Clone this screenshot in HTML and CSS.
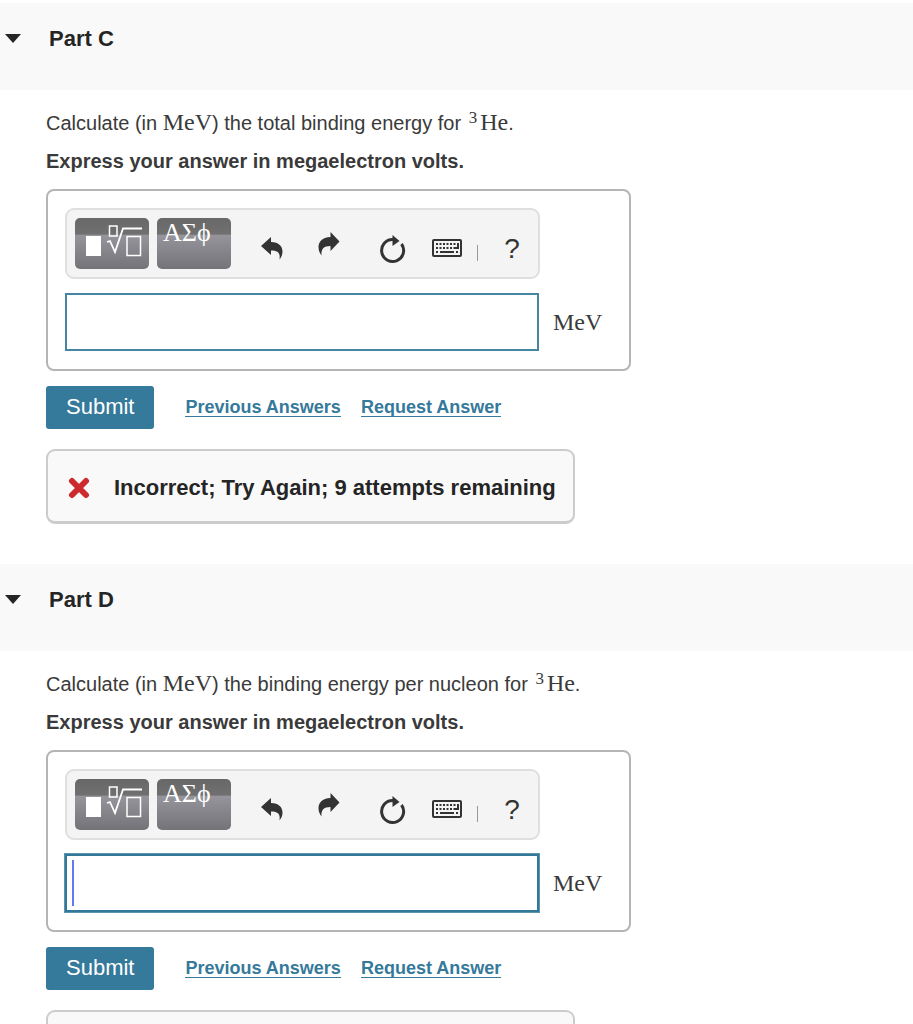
FILE: index.html
```
<!DOCTYPE html>
<html lang="en">
<head>
    <meta charset="UTF-8">
    <meta name="viewport" content="width=device-width, initial-scale=1.0">
    <title>Binding Energy</title>
    <link rel="stylesheet" href="styles.css">
</head>
<body>
    <!-- toolbar icons, shared by both parts -->
    <svg class="sprite" aria-hidden="true">
        <symbol id="icon-template" viewBox="0 0 74 51">
            <rect x="11" y="18" width="15" height="20" fill="#fff"/>
            <rect x="34.500" y="8" width="7.500" height="10" fill="none" stroke="#fff" stroke-width="1.500"/>
            <path d="M32 24l3-1 5 11L48 10.500h19" fill="none" stroke="#fff" stroke-width="1.800"/>
            <rect x="52" y="18.500" width="13.500" height="19" fill="none" stroke="#fff" stroke-width="1.500"/>
        </symbol>
        <symbol id="icon-undo" viewBox="0 0 22 50">
            <path d="M0 28l10-9v5c8 0 11.500 4.500 11.500 9.500 0 3-1 5.500-3 8 1-6.500-1.500-9-8.500-9V37z"/>
        </symbol>
        <symbol id="icon-redo" viewBox="0 0 22 50">
            <path d="M21.500 23.500L12.500 14v5C4 19.500.5 24 .5 29c0 3 1 6 3 8.500C3 31 5.500 28 12.500 28v5z"/>
        </symbol>
        <symbol id="icon-reset" viewBox="0 0 26 50">
            <path d="M13 21.500A11 11 0 1 0 21.500 26" fill="none" stroke="currentColor" stroke-width="3"/>
            <path d="M12.500 17l7 6-7 5z"/>
        </symbol>
        <symbol id="icon-keyboard" viewBox="0 0 30 50">
            <rect x="1" y="22" width="28" height="16" rx="1" fill="none" stroke="currentColor" stroke-width="2"/>
            <path d="M4 26h20M4 30h19M4 34h3M24 34h3" fill="none" stroke="currentColor" stroke-width="2" stroke-dasharray="2 1.500"/>
            <path d="M8 34h14M26 25v5h-4" fill="none" stroke="currentColor" stroke-width="2"/>
        </symbol>
    </svg>

    <section class="part">
        <header class="part-header">
            <span class="arrow"></span>
            <h2>Part C</h2>
        </header>
        <div class="part-body">
            <p class="question">Calculate (in <span class="math">MeV</span>) the total binding energy for <span class="math"><sup>3</sup>He</span>.</p>
            <p class="instructions"><label for="answer-c">Express your answer in megaelectron volts.</label></p>
            <div class="answer-box">
                <div class="toolbar">
                    <button type="button" class="dark-btn" aria-label="Templates"><svg width="74" height="51"><use href="#icon-template"/></svg></button>
                    <button type="button" class="dark-btn symbols">ΑΣϕ</button>
                    <button type="button" class="icon-btn" aria-label="Undo"><svg width="22" height="50"><use href="#icon-undo"/></svg></button>
                    <button type="button" class="icon-btn" aria-label="Redo"><svg width="22" height="50"><use href="#icon-redo"/></svg></button>
                    <button type="button" class="icon-btn" aria-label="Reset"><svg width="26" height="50"><use href="#icon-reset"/></svg></button>
                    <button type="button" class="icon-btn" aria-label="Keyboard shortcuts"><svg width="30" height="50"><use href="#icon-keyboard"/></svg></button>
                    <span class="divider"></span>
                    <button type="button" class="icon-btn help" aria-label="Help">?</button>
                </div>
                <div class="answer-row">
                    <input type="text" id="answer-c" class="answer-input">
                    <span class="math">MeV</span>
                </div>
            </div>
            <div class="actions">
                <button type="submit" class="submit-btn">Submit</button>
                <a href="#">Previous Answers</a>
                <a href="#">Request Answer</a>
            </div>
            <div class="feedback">
                <svg class="wrong" width="22" height="22" viewBox="0 0 22 22"><path d="M4 4l14 14M18 4L4 18"/></svg>
                <span>Incorrect; Try Again; 9 attempts remaining</span>
            </div>
        </div>
    </section>

    <section class="part">
        <header class="part-header">
            <span class="arrow"></span>
            <h2>Part D</h2>
        </header>
        <div class="part-body">
            <p class="question">Calculate (in <span class="math">MeV</span>) the binding energy per nucleon for <span class="math"><sup>3</sup>He</span>.</p>
            <p class="instructions"><label for="answer-d">Express your answer in megaelectron volts.</label></p>
            <div class="answer-box">
                <div class="toolbar">
                    <button type="button" class="dark-btn" aria-label="Templates"><svg width="74" height="51"><use href="#icon-template"/></svg></button>
                    <button type="button" class="dark-btn symbols">ΑΣϕ</button>
                    <button type="button" class="icon-btn" aria-label="Undo"><svg width="22" height="50"><use href="#icon-undo"/></svg></button>
                    <button type="button" class="icon-btn" aria-label="Redo"><svg width="22" height="50"><use href="#icon-redo"/></svg></button>
                    <button type="button" class="icon-btn" aria-label="Reset"><svg width="26" height="50"><use href="#icon-reset"/></svg></button>
                    <button type="button" class="icon-btn" aria-label="Keyboard shortcuts"><svg width="30" height="50"><use href="#icon-keyboard"/></svg></button>
                    <span class="divider"></span>
                    <button type="button" class="icon-btn help" aria-label="Help">?</button>
                </div>
                <div class="answer-row">
                    <input type="text" id="answer-d" class="answer-input active">
                    <span class="math">MeV</span>
                </div>
            </div>
            <div class="actions">
                <button type="submit" class="submit-btn">Submit</button>
                <a href="#">Previous Answers</a>
                <a href="#">Request Answer</a>
            </div>
            <div class="feedback"></div>
        </div>
    </section>
</body>
</html>
```
FILE: styles.css
```
* {
    box-sizing: border-box;
}
body {
    margin: 0;
    padding-top: 3px;
    background: #fff;
    color: #3a3a3a;
    font-family: "Liberation Sans", Arial, Helvetica, sans-serif;
    font-size: 20px;
    line-height: 24px;
}
button {
    font-family: inherit;
    cursor: pointer;
}
.sprite {
    display: none;
}
.part-header {
    display: flex;
    align-items: flex-start;
    gap: 28px;
    height: 87px;
    padding: 24px 5px;
    background: #f9f9f9;
    color: #252525;
}
.part-header h2 {
    margin: 0;
    font-size: 22px;
    line-height: 24px;
}
.arrow {
    margin-top: 7px;
    border-left: 8px solid transparent;
    border-right: 8px solid transparent;
    border-top: 9px solid #252525;
}
.part-body {
    padding: 19px 20px 40px 46px;
}
.question,
.instructions {
    margin: 0 0 12px;
    line-height: 26px;
}
.instructions {
    margin-bottom: 15px;
    font-weight: bold;
}
.math {
    font-family: "Liberation Serif", "Times New Roman", serif;
    font-size: 24px;
}
.math sup {
    margin: 0 3px 0 2px;
    font-size: 17px;
    line-height: 0;
    vertical-align: 7px;
}
.answer-box {
    max-width: 585px;
    padding: 17px 17px 18px;
    border: 2px solid #b5b5b5;
    border-radius: 8px;
}
.toolbar {
    display: grid;
    grid-template-columns: 82px 84px 62px 52px 76px 32px 28px 42px;
    width: 475px;
    max-width: 100%;
    padding: 8px;
    border: 2px solid #dfdfdf;
    border-radius: 9px;
    background: #f4f4f4;
}
.dark-btn {
    width: 74px;
    height: 51px;
    padding: 0;
    border: 0;
    border-radius: 5px;
    background: linear-gradient(#686868, #707070 32%, #96959c 33%, #747378);
    color: #fff;
}
.dark-btn svg,
.icon-btn svg {
    display: block;
}
.symbols {
    padding: 0 0 22px 6px;
    font-family: "Liberation Serif", serif;
    font-size: 26px;
    line-height: 26px;
    text-align: left;
}
.icon-btn {
    display: flex;
    justify-content: center;
    padding: 0;
    border: 0;
    background: none;
    color: #333;
    fill: currentColor;
}
.divider {
    justify-self: center;
    width: 1px;
    height: 16px;
    margin-top: 27px;
    background: #999;
}
.help {
    padding-top: 17px;
    font-size: 28px;
    line-height: 28px;
}
.answer-row {
    display: flex;
    align-items: center;
    gap: 14px;
    margin-top: 14px;
}
.answer-input {
    width: 474px;
    min-width: 0;
    height: 58px;
    padding: 4px 10px;
    border: 2px solid #4786a3;
    border-radius: 0;
    background: #fff;
    font-size: 22px;
}
/* focused field with its caret */
.answer-input.active {
    border-color: #337899;
    outline: 1px solid #5c94ae;
    background: linear-gradient(#647ae6, #647ae6) 5px center / 2px 46px no-repeat #fff;
}
.actions {
    display: flex;
    align-items: center;
    gap: 20px;
    margin-top: 15px;
}
.submit-btn {
    height: 43px;
    margin-right: 11px;
    padding: 0 20px 2px;
    border: 0;
    border-radius: 3px;
    background: #35799b;
    color: #fff;
    font-size: 22px;
}
.actions a {
    border-bottom: 1px solid #35799b;
    color: #35799b;
    font-size: 18px;
    font-weight: bold;
    line-height: 18px;
    text-decoration: none;
}
.feedback {
    display: flex;
    align-items: center;
    gap: 24px;
    width: 529px;
    max-width: 100%;
    min-height: 75px;
    margin-top: 20px;
    padding: 7px 12px 4px 20px;
    border: 2px solid #ccc;
    border-bottom-width: 3px;
    border-radius: 9px;
    background: #f9f9f9;
    color: #252525;
    font-size: 22px;
    font-weight: bold;
}
.wrong {
    flex: none;
    fill: none;
    stroke: #cc2a2d;
    stroke-width: 6;
    stroke-linecap: round;
}
```
